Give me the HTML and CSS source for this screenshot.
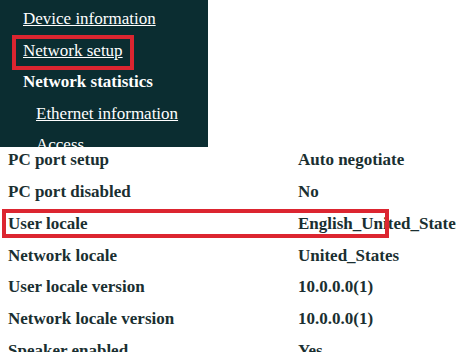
FILE: index.html
```html
<!DOCTYPE html>
<html lang="en">
<head>
    <meta charset="UTF-8">
    <meta name="viewport" content="width=device-width, initial-scale=1.0">
    <title>Device settings</title>
    <link rel="stylesheet" href="styles.css">
</head>
<body>
    <div class="nav">
        <ul>
            <li><a href="#">Device information</a></li>
            <li><a href="#">Network setup</a></li>
            <li class="group">Network statistics</li>
            <li class="sub"><a href="#">Ethernet information</a></li>
            <li class="sub"><a href="#">Access</a></li>
        </ul>
    </div>

    <div class="panel">
        <table class="info">
            <tr><td>PC port setup</td><td>Auto negotiate</td></tr>
            <tr><td>PC port disabled</td><td>No</td></tr>
            <tr><td>User locale</td><td>English_United_States</td></tr>
            <tr><td>Network locale</td><td>United_States</td></tr>
            <tr><td>User locale version</td><td>10.0.0.0(1)</td></tr>
            <tr><td>Network locale version</td><td>10.0.0.0(1)</td></tr>
            <tr><td>Speaker enabled</td><td>Yes</td></tr>
        </table>
    </div>

    <!-- highlight boxes drawn over the page -->
    <div class="mark mark-nav"></div>
    <div class="mark mark-row"></div>
</body>
</html>
```

FILE: styles.css
```css
html, body {
    margin: 0;
    padding: 0;
    background: #fff;
    overflow: hidden;
}

body {
    position: relative;
    width: 474px;
    height: 357px;
    font-family: 'Liberation Serif', 'Times New Roman', serif;
    font-size: 17px;
    color: #1a2f31;
}

.nav {
    width: 208px;
    height: 147px;
    background: #0b2d31;
    overflow: hidden;
}

.nav ul {
    list-style: none;
    margin: 0;
    padding: 3px 0 0 23px;
    line-height: 31.6px;
}

.nav li {
    white-space: nowrap;
}

.nav a {
    color: #fff;
    text-decoration: underline;
}

.nav .group {
    color: #fff;
    font-weight: bold;
}

.nav .sub {
    padding-left: 13px;
}

.panel {
    width: 456px;
    height: 205px;
    overflow: hidden;
}

.info {
    border-collapse: collapse;
    table-layout: fixed;
    width: 520px;
    font-weight: bold;
    white-space: nowrap;
}

.info td {
    box-sizing: border-box;
    padding: 3.2px 0 8.6px 0;
    line-height: 20px;
    vertical-align: top;
}

.info td:first-child {
    width: 298px;
    padding-left: 8px;
}

.mark {
    position: absolute;
    border: 4px solid #dc2530;
    box-sizing: border-box;
}

.mark-nav {
    left: 12px;
    top: 35px;
    width: 122px;
    height: 35px;
}

.mark-row {
    left: 2px;
    top: 209px;
    width: 387px;
    height: 29px;
}
```
